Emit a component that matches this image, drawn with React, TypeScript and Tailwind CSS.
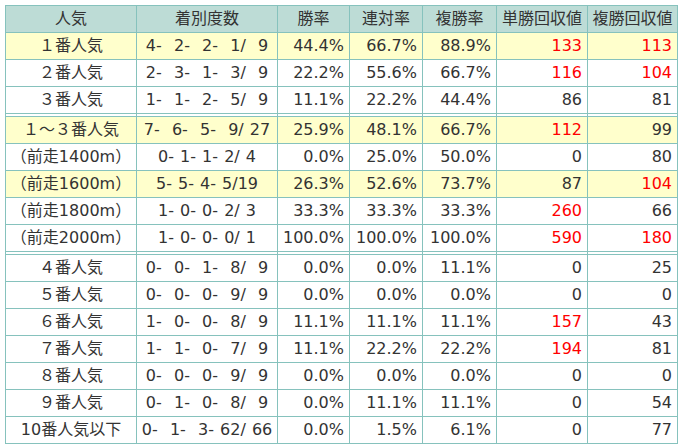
import React from 'react';

type Row = {
  label: string;
  counts: string;
  win: string;
  place: string;
  show: string;
  winBack: number;
  showBack: number;
  hl?: boolean;
};

const groups: Row[][] = [
  [
    { label: '１番人気', counts: '4-  2-  2-  1/  9', win: '44.4%', place: '66.7%', show: '88.9%', winBack: 133, showBack: 113, hl: true },
    { label: '２番人気', counts: '2-  3-  1-  3/  9', win: '22.2%', place: '55.6%', show: '66.7%', winBack: 116, showBack: 104 },
    { label: '３番人気', counts: '1-  1-  2-  5/  9', win: '11.1%', place: '22.2%', show: '44.4%', winBack: 86, showBack: 81 },
  ],
  [
    { label: '１～３番人気', counts: '7-  6-  5-  9/ 27', win: '25.9%', place: '48.1%', show: '66.7%', winBack: 112, showBack: 99, hl: true },
    { label: '（前走1400m）', counts: '0- 1- 1- 2/ 4', win: '0.0%', place: '25.0%', show: '50.0%', winBack: 0, showBack: 80 },
    { label: '（前走1600m）', counts: '5- 5- 4- 5/19', win: '26.3%', place: '52.6%', show: '73.7%', winBack: 87, showBack: 104, hl: true },
    { label: '（前走1800m）', counts: '1- 0- 0- 2/ 3', win: '33.3%', place: '33.3%', show: '33.3%', winBack: 260, showBack: 66 },
    { label: '（前走2000m）', counts: '1- 0- 0- 0/ 1', win: '100.0%', place: '100.0%', show: '100.0%', winBack: 590, showBack: 180 },
  ],
  [
    { label: '４番人気', counts: '0-  0-  1-  8/  9', win: '0.0%', place: '0.0%', show: '11.1%', winBack: 0, showBack: 25 },
    { label: '５番人気', counts: '0-  0-  0-  9/  9', win: '0.0%', place: '0.0%', show: '0.0%', winBack: 0, showBack: 0 },
    { label: '６番人気', counts: '1-  0-  0-  8/  9', win: '11.1%', place: '11.1%', show: '11.1%', winBack: 157, showBack: 43 },
    { label: '７番人気', counts: '1-  1-  0-  7/  9', win: '11.1%', place: '22.2%', show: '22.2%', winBack: 194, showBack: 81 },
    { label: '８番人気', counts: '0-  0-  0-  9/  9', win: '0.0%', place: '0.0%', show: '0.0%', winBack: 0, showBack: 0 },
    { label: '９番人気', counts: '0-  1-  0-  8/  9', win: '0.0%', place: '11.1%', show: '11.1%', winBack: 0, showBack: 54 },
    { label: '10番人気以下', counts: '0-  1-  3- 62/ 66', win: '0.0%', place: '1.5%', show: '6.1%', winBack: 0, showBack: 77 },
  ],
];

const headers = ['人気', '着別度数', '勝率', '連対率', '複勝率', '単勝回収値', '複勝回収値'];

const cell = 'p-0 h-[26px] leading-[26px] whitespace-pre';
const num = `${cell} text-right pr-[5px]`;

const backClass = (v: number) => (v >= 100 ? 'text-[#ff0000]' : '');

export default function App() {
  return (
    <div className="bg-white w-[685px] h-[448px] pt-[5px] pl-[5px]">
      <table
        className="bg-[#86c2bd] border-separate [border-spacing:1px] table-fixed text-[16px] text-[#333333]"
        style={{ fontFamily: '"DejaVu Sans", "Noto Sans CJK JP", sans-serif' }}
      >
        <colgroup>
          <col className="w-[130px]" />
          <col className="w-[140px]" />
          <col className="w-[71px]" />
          <col className="w-[72px]" />
          <col className="w-[73px]" />
          <col className="w-[90px]" />
          <col className="w-[89px]" />
        </colgroup>
        <thead>
          <tr>
            {headers.map((h) => (
              <th key={h} className={`${cell} font-normal text-center bg-[#bddcd6]`}>
                {h}
              </th>
            ))}
          </tr>
        </thead>
        <tbody>
          {groups.map((rows, gi) => (
            <React.Fragment key={gi}>
              {gi > 0 && (
                <tr>
                  {headers.map((h) => (
                    <td key={h} className="p-0 h-[2px] bg-white" />
                  ))}
                </tr>
              )}
              {rows.map((r) => {
                const bg = r.hl ? 'bg-[#ffffcc]' : 'bg-white';
                return (
                  <tr key={r.label} className={bg}>
                    <td className={`${cell} text-center`}>{r.label}</td>
                    <td className={`${cell} text-center [word-spacing:1px]`}>{r.counts}</td>
                    <td className={num}>{r.win}</td>
                    <td className={num}>{r.place}</td>
                    <td className={num}>{r.show}</td>
                    <td className={`${num} ${backClass(r.winBack)}`}>{r.winBack}</td>
                    <td className={`${num} ${backClass(r.showBack)}`}>{r.showBack}</td>
                  </tr>
                );
              })}
            </React.Fragment>
          ))}
        </tbody>
      </table>
    </div>
  );
}
